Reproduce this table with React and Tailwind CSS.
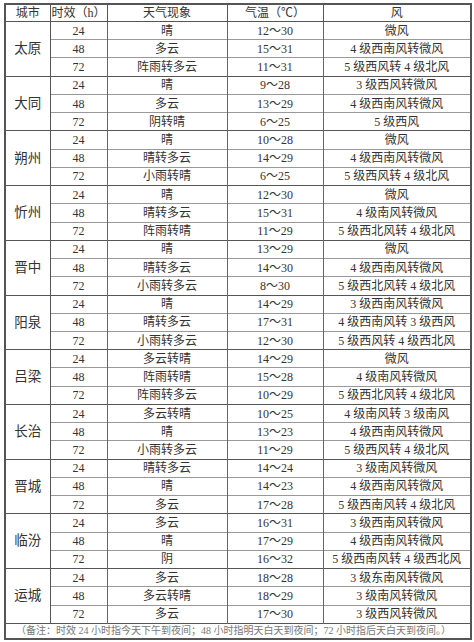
import React from "react";

const data = [
  ["太原", [["24", "晴", "12～30", "微风"], ["48", "多云", "15～31", "4 级西南风转微风"], ["72", "阵雨转多云", "11～31", "5 级西风转 4 级北风"]]],
  ["大同", [["24", "晴", "9～28", "3 级西风转微风"], ["48", "多云", "13～29", "4 级西南风转微风"], ["72", "阴转晴", "6～25", "5 级西风"]]],
  ["朔州", [["24", "晴", "10～28", "微风"], ["48", "晴转多云", "14～29", "4 级西南风转微风"], ["72", "小雨转晴", "6～25", "5 级西风转 4 级北风"]]],
  ["忻州", [["24", "晴", "12～30", "微风"], ["48", "晴转多云", "15～31", "4 级南风转微风"], ["72", "阵雨转晴", "11～29", "5 级西北风转 4 级北风"]]],
  ["晋中", [["24", "晴", "13～29", "微风"], ["48", "晴转多云", "14～30", "4 级西南风转微风"], ["72", "小雨转多云", "8～30", "5 级西北风转 4 级北风"]]],
  ["阳泉", [["24", "晴", "14～29", "3 级西南风转微风"], ["48", "晴转多云", "17～31", "4 级西南风转 3 级西风"], ["72", "小雨转多云", "12～30", "5 级西风转 4 级西北风"]]],
  ["吕梁", [["24", "多云转晴", "14～29", "微风"], ["48", "阵雨转晴", "15～28", "4 级南风转微风"], ["72", "阵雨转多云", "10～29", "5 级西北风转 4 级北风"]]],
  ["长治", [["24", "多云转晴", "10～25", "4 级南风转 3 级南风"], ["48", "晴", "13～23", "4 级西南风转微风"], ["72", "小雨转多云", "11～29", "5 级西风转 4 级北风"]]],
  ["晋城", [["24", "晴转多云", "14～24", "3 级南风转微风"], ["48", "晴", "14～23", "4 级西南风转微风"], ["72", "多云", "17～28", "5 级西南风转 4 级北风"]]],
  ["临汾", [["24", "多云", "16～31", "3 级西南风转微风"], ["48", "晴", "17～29", "4 级西南风转微风"], ["72", "阴", "16～32", "5 级西南风转 4 级西北风"]]],
  ["运城", [["24", "多云", "18～28", "3 级东南风转微风"], ["48", "多云转晴", "18～29", "3 级南风转微风"], ["72", "多云", "17～30", "3 级西风转微风"]]],
];

export default function App() {
  return (
    <div className="bg-white w-[474px] h-[642px] pt-[3px] pl-[4px]" style={{ fontFamily: '"Liberation Serif", "Noto Sans CJK SC", serif' }}>
      <table className="w-[466px] border-collapse border-2 border-[#555] text-[12px] text-[#333] leading-none table-fixed">
        <colgroup>
          <col className="w-[45px]" />
          <col className="w-[57px]" />
          <col className="w-[120px]" />
          <col className="w-[96px]" />
          <col className="w-[148px]" />
        </colgroup>
        <thead>
          <tr className="h-[17.5px]">
            <th className="font-normal border border-[#555] p-0 text-center">城市</th>
            <th className="font-normal border border-[#555] p-0 text-center">时效（h）</th>
            <th className="font-normal border border-[#555] p-0 text-center">天气现象</th>
            <th className="font-normal border border-[#555] p-0 text-center">气温（℃）</th>
            <th className="font-normal border border-[#555] p-0 text-center">风</th>
          </tr>
        </thead>
        <tbody>
          {data.map(([city, rows]) =>
            rows.map((r, i) => (
              <tr key={city + i} className={i === 0 ? "h-[18.24px] border-t border-t-[#555]" : "h-[18.24px]"}>
                {i === 0 && (
                  <td rowSpan={3} className="border border-[#555] p-0 text-center text-[13.5px]">{city}</td>
                )}
                <td className={`border-x border-x-[#666] p-0 text-center ${i === 0 ? "border-t border-t-[#555]" : "border-t border-t-[#999]"}`}>{r[0]}</td>
                <td className={`border-x border-x-[#666] p-0 text-center ${i === 0 ? "border-t border-t-[#555]" : "border-t border-t-[#999]"}`}>{r[1]}</td>
                <td className={`border-x border-x-[#666] p-0 text-center ${i === 0 ? "border-t border-t-[#555]" : "border-t border-t-[#999]"}`}>{r[2]}</td>
                <td className={`border-x border-x-[#666] p-0 text-center ${i === 0 ? "border-t border-t-[#555]" : "border-t border-t-[#999]"}`}>{r[3]}</td>
              </tr>
            ))
          )}
          <tr className="h-[16px]">
            <td colSpan={5} className="border border-[#555] p-0 pl-[10px] text-left text-[10px] text-[#777] whitespace-nowrap">
              （备注：时效 24 小时指今天下午到夜间；48 小时指明天白天到夜间；72 小时指后天白天到夜间。）
            </td>
          </tr>
        </tbody>
      </table>
    </div>
  );
}
